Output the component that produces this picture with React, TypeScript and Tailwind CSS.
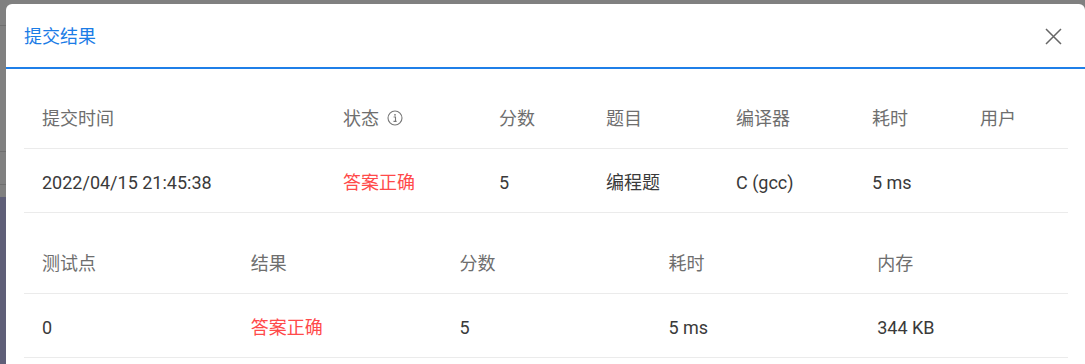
import React from 'react'

const font = { fontFamily: "Roboto, 'Noto Sans CJK SC', sans-serif" }

const InfoIcon = () => (
  <svg width="16" height="16" viewBox="0 0 16 16" fill="none" className="ml-[8px]">
    <circle cx="8" cy="8" r="7" stroke="#777" strokeWidth="1.1" />
    <circle cx="8" cy="4.8" r="0.9" fill="#777" />
    <path d="M6.6 7h1.9v4.3M6.5 11.4h3.1" stroke="#777" strokeWidth="1.1" />
  </svg>
)

const CloseIcon = () => (
  <svg width="17" height="17" viewBox="0 0 17 17" fill="none">
    <path d="M1 1l15 15M16 1L1 16" stroke="#666" strokeWidth="1.5" />
  </svg>
)

const summaryHead = ['提交时间', '状态', '分数', '题目', '编译器', '耗时', '用户']
const caseHead = ['测试点', '结果', '分数', '耗时', '内存']

export default function App() {
  return (
    <div className="w-[1085px] h-[364px] flex bg-[#808080] overflow-hidden" style={font}>
      {/* page behind the dialog */}
      <div className="w-[6px] shrink-0 flex flex-col">
        <div className="h-[26px] border-b border-[#6f6f6f]" />
        <div className="h-[126px] border-b border-[#6f6f6f]" />
        <div className="h-[33px] border-b border-[#6f6f6f]" />
        <div className="h-[12px]" />
        <div className="flex-1 bg-[#5f5f78]" />
      </div>

      <div className="mt-[4px] w-[1079px] shrink-0 bg-white rounded-t-[6px] flex flex-col">
        <div className="h-[65px] pl-[18px] pt-[1px] flex items-center justify-between border-b-2 border-[#1f7fe8]">
          <span className="text-[18px] text-[#1b7ce6]">提交结果</span>
          <button className="mr-[23px]">
            <CloseIcon />
          </button>
        </div>

        <div className="pt-[16px] pl-[18px] pr-[17px]">
          {/* summary */}
          <div className="grid grid-cols-[301px_156px_107px_130px_136px_108px_1fr]">
            {summaryHead.map((h) => (
              <div key={h} className="h-[64px] pl-[18px] pt-[3px] flex items-center border-b border-[#ebebeb] text-[18px] text-[#6e6e6e]">
                {h}
                {h === '状态' && <InfoIcon />}
              </div>
            ))}
            {['2022/04/15 21:45:38', '答案正确', '5', '编程题', 'C (gcc)', '5 ms', ''].map((v, i) => (
              <div
                key={i}
                className={`h-[64px] pl-[18px] pt-[3px] flex items-center border-b border-[#ebebeb] text-[18px] ${
                  i === 1 ? 'text-[#ff4a4a]' : 'text-[#3a3a3a]'
                }`}
              >
                {v}
              </div>
            ))}
          </div>

          {/* test cases */}
          <div className="mt-[17px] grid grid-cols-5">
            {caseHead.map((h) => (
              <div key={h} className="h-[64px] pl-[18px] pt-[3px] flex items-center border-b border-[#ebebeb] text-[18px] text-[#6e6e6e]">
                {h}
              </div>
            ))}
            {['0', '答案正确', '5', '5 ms', '344 KB'].map((v, i) => (
              <div
                key={i}
                className={`h-[64px] pl-[18px] pt-[3px] flex items-center border-b border-[#ebebeb] text-[18px] ${
                  i === 1 ? 'text-[#ff4a4a]' : 'text-[#3a3a3a]'
                }`}
              >
                {v}
              </div>
            ))}
          </div>
        </div>
      </div>
    </div>
  )
}
